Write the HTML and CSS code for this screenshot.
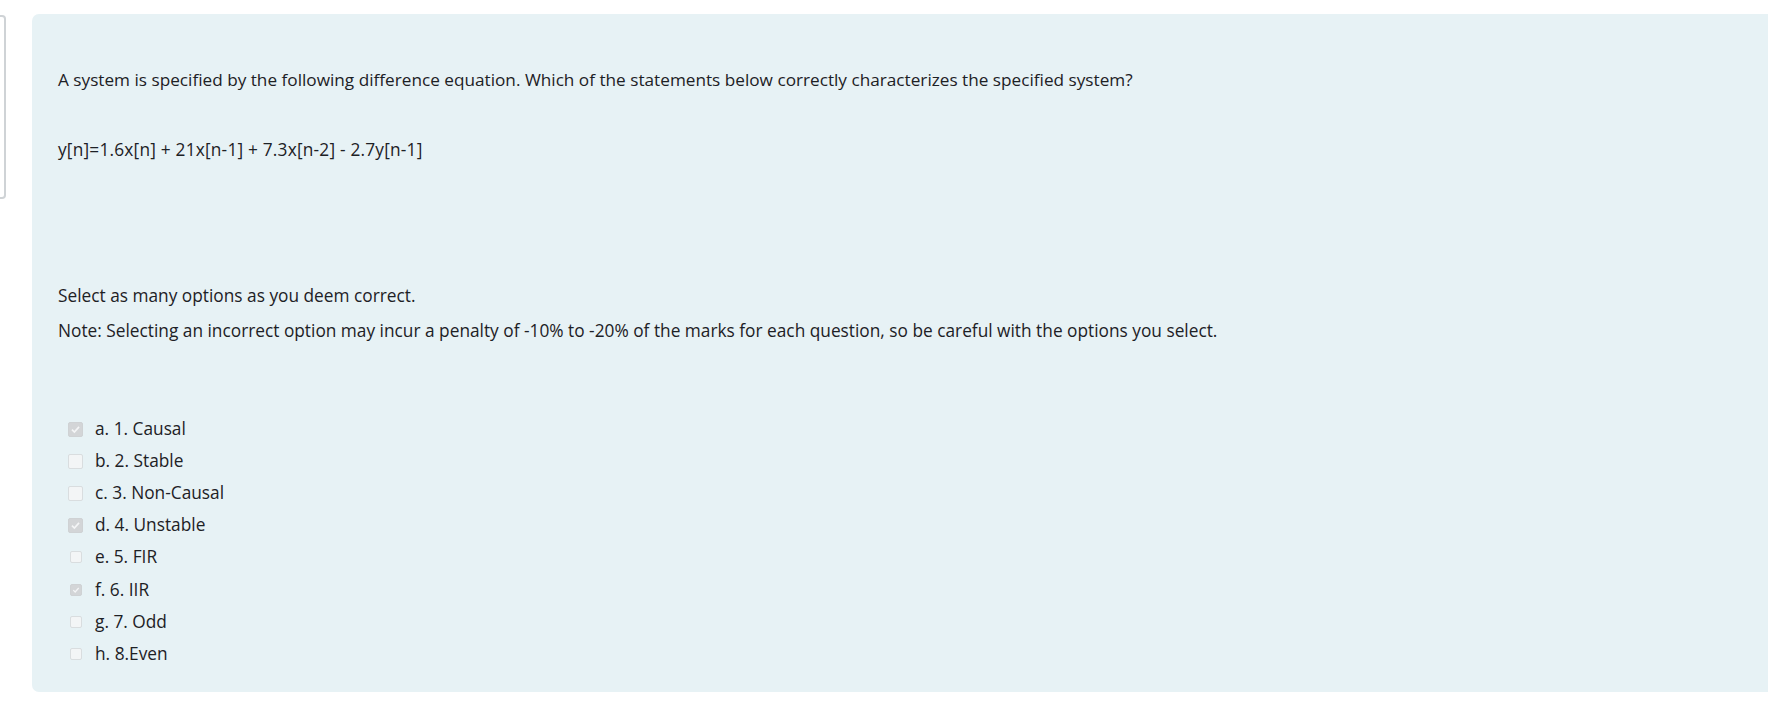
FILE: index.html
```html
<!DOCTYPE html>
<html lang="en">
<head>
<meta charset="utf-8">
<title>Question</title>
<link rel="stylesheet" href="styles.css">
</head>
<body>
<div class="page">
  <div class="stub"></div>
  <div class="panel">
    <p class="qline q1">A system is specified by the following difference equation. Which of the statements below correctly characterizes the specified system?</p>
    <p class="qline eq">y[n]=1.6x[n] + 21x[n-1] + 7.3x[n-2] - 2.7y[n-1]</p>
    <p class="qline sel">Select as many options as you deem correct.</p>
    <p class="qline note">Note: Selecting an incorrect option may incur a penalty of -10% to -20% of the marks for each question, so be careful with the options you select.</p>
    <div class="options">
      <div class="opt"><span class="cb big checked"><svg viewBox="0 0 14 14"><path d="M3.2 7.2 L5.8 9.8 L10.8 4.2" /></svg></span><span class="lbl">a. 1. Causal</span></div>
      <div class="opt"><span class="cb big"></span><span class="lbl">b. 2. Stable</span></div>
      <div class="opt"><span class="cb big"></span><span class="lbl">c. 3. Non-Causal</span></div>
      <div class="opt"><span class="cb big checked"><svg viewBox="0 0 14 14"><path d="M3.2 7.2 L5.8 9.8 L10.8 4.2" /></svg></span><span class="lbl">d. 4. Unstable</span></div>
      <div class="opt"><span class="cb small"></span><span class="lbl">e. 5. FIR</span></div>
      <div class="opt"><span class="cb small checked"><svg viewBox="0 0 14 14"><path d="M3.2 7.2 L5.8 9.8 L10.8 4.2" /></svg></span><span class="lbl">f. 6. IIR</span></div>
      <div class="opt"><span class="cb small"></span><span class="lbl">g. 7. Odd</span></div>
      <div class="opt"><span class="cb small"></span><span class="lbl">h. 8.Even</span></div>
    </div>
  </div>
</div>
</body>
</html>
```

FILE: styles.css
```css
html, body {
  margin: 0;
  padding: 0;
  background: #ffffff;
  overflow: hidden;
}

body {
  font-family: "Open Sans", "Noto Sans", sans-serif;
  color: #1d2125;
}

.page {
  display: flex;
  align-items: flex-start;
  padding-top: 14px;
  gap: 26px;
  width: 1800px;
}

.stub {
  width: 4px;
  height: 180px;
  margin-top: 1px;
  border: 2px solid #cfd3d6;
  border-left: none;
  border-radius: 0 4px 4px 0;
  background: #fff;
  flex: 0 0 auto;
}

.panel {
  flex: 1 1 auto;
  background: #e7f2f5;
  border-radius: 7px;
  padding: 54px 0 22px 26px;
}

.qline {
  margin: 0;
  font-size: 17.3px;
  line-height: 24px;
  white-space: nowrap;
}

.q1 { font-size: 17.2px; }

.eq {
  margin-top: 46px;
  letter-spacing: 0.2px;
}
.sel { margin-top: 122px; }
.note { margin-top: 11px; }

.options {
  margin-top: 70px;
  display: flex;
  flex-direction: column;
}

.opt {
  height: 32.1px;
  display: flex;
  align-items: center;
}

.cb {
  box-sizing: border-box;
  display: inline-flex;
  align-items: center;
  justify-content: center;
  border: 1px solid #d9dddf;
  background: #f3f5f6;
  border-radius: 2px;
  flex: 0 0 auto;
}

.cb.big {
  width: 15px;
  height: 15px;
  margin-left: 10px;
  margin-right: 12px;
}

.cb.small {
  width: 12px;
  height: 12px;
  margin-left: 12px;
  margin-right: 13px;
}

.cb.checked {
  background: #d3d5d7;
  border-color: #cfd2d4;
}

.cb svg {
  width: 100%;
  height: 100%;
}

.cb svg path {
  fill: none;
  stroke: #f4f5f6;
  stroke-width: 1.8;
}

.lbl {
  font-size: 17.3px;
  line-height: 22px;
}
```
